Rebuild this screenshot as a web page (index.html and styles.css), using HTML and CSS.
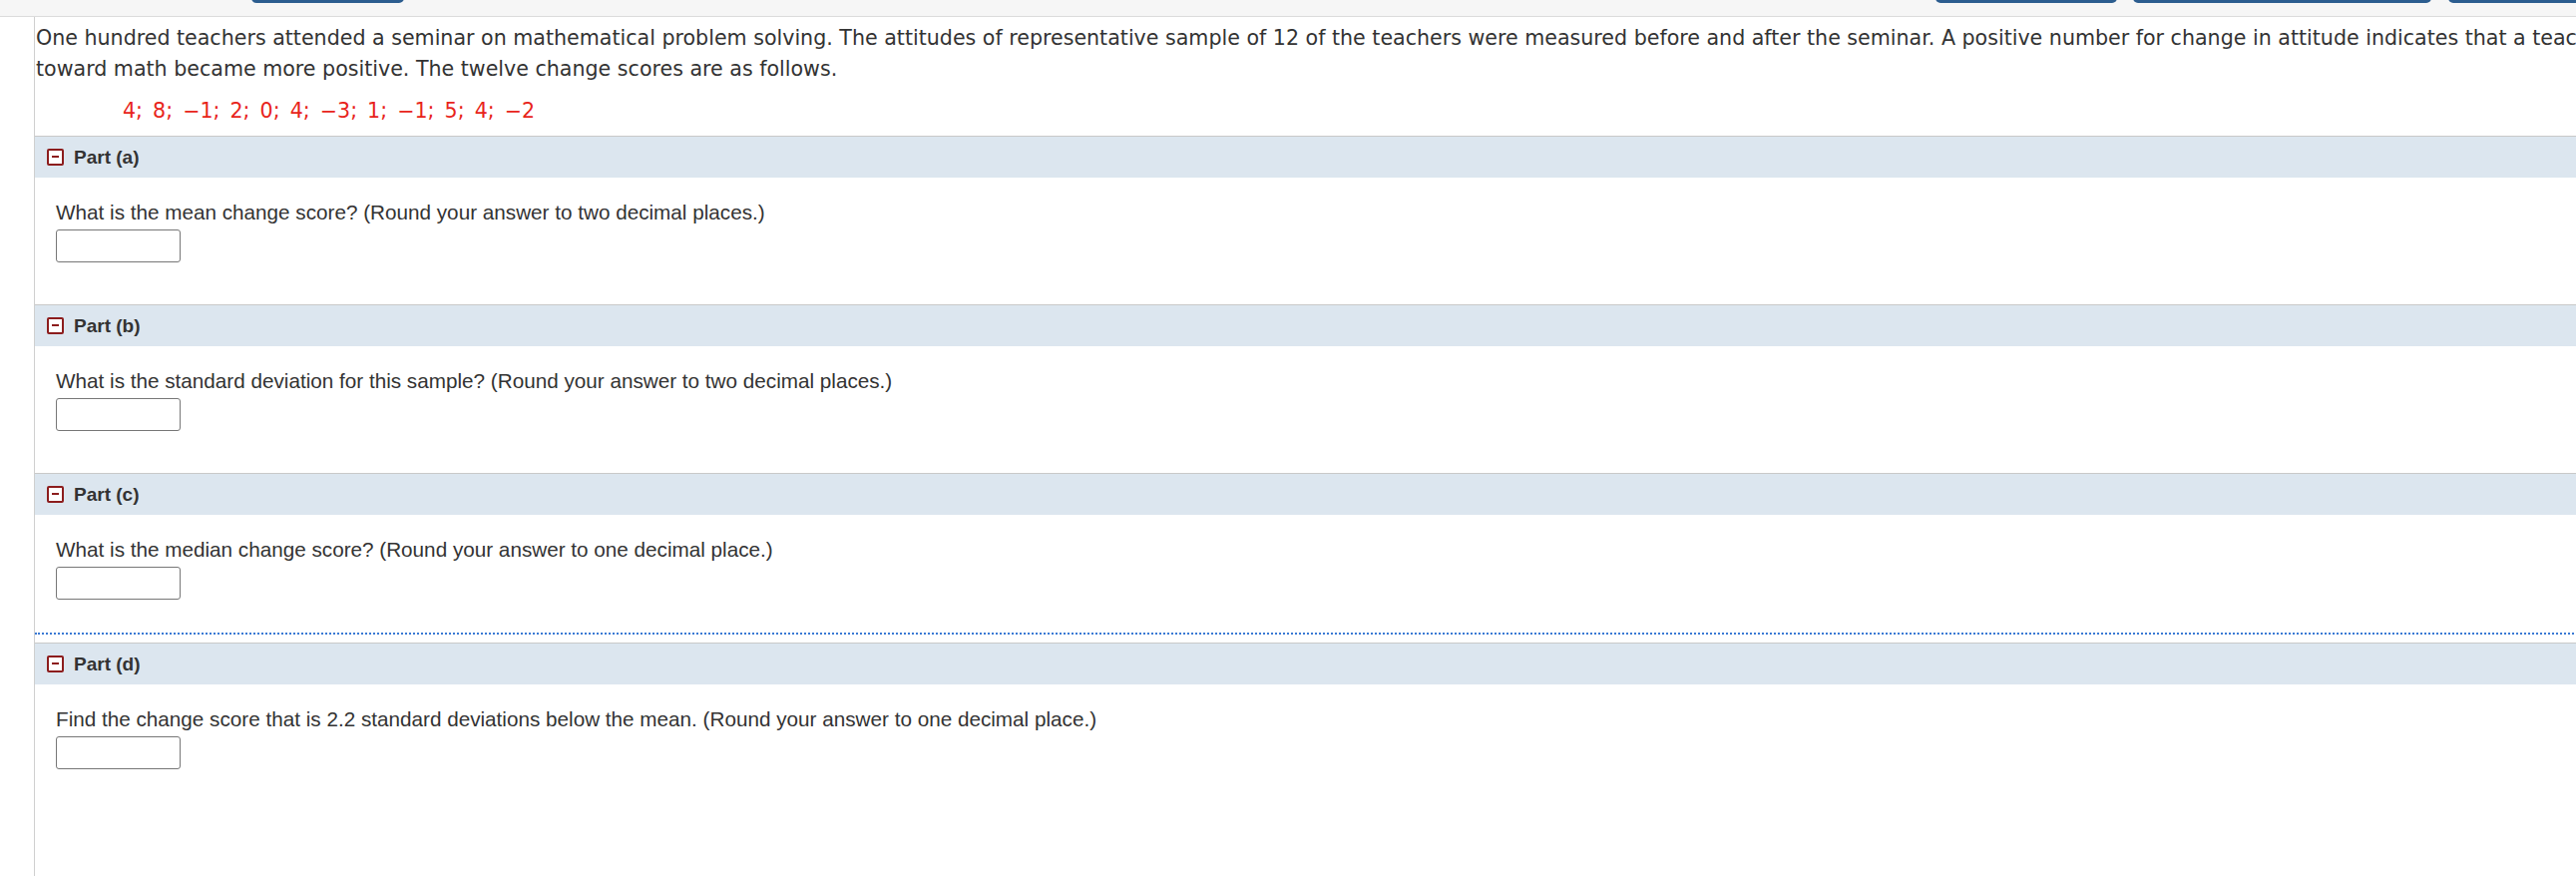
FILE: index.html
```
<!DOCTYPE html>
<html lang="en">
<head>
<meta charset="utf-8">
<title>Seminar problem</title>
<link rel="stylesheet" href="styles.css">
</head>
<body>
<div class="topbar">
  <span class="tab tab1"></span>
  <span class="tab tab2"></span>
  <span class="tab tab3"></span>
  <span class="tab tab4"></span>
</div>
<div class="main">
  <div class="intro">One hundred teachers attended a seminar on mathematical problem solving. The attitudes of representative sample of 12 of the teachers were measured before and after the seminar. A positive number for change in attitude indicates that a teacher's attitude toward math became more positive. The twelve change scores are as follows.</div>
  <div class="data">4; 8; −1; 2; 0; 4; −3; 1; −1; 5; 4; −2</div>

  <div class="part">
    <div class="part-head"><span class="toggle"></span><span class="part-title">Part (a)</span></div>
    <div class="part-body">
      <p class="q">What is the mean change score? (Round your answer to two decimal places.)</p>
      <input class="answer" type="text">
    </div>
  </div>

  <div class="part">
    <div class="part-head"><span class="toggle"></span><span class="part-title">Part (b)</span></div>
    <div class="part-body">
      <p class="q">What is the standard deviation for this sample? (Round your answer to two decimal places.)</p>
      <input class="answer" type="text">
    </div>
  </div>

  <div class="part">
    <div class="part-head"><span class="toggle"></span><span class="part-title">Part (c)</span></div>
    <div class="part-body part-body-c">
      <p class="q">What is the median change score? (Round your answer to one decimal place.)</p>
      <input class="answer" type="text">
    </div>
  </div>
  <div class="sep"></div>

  <div class="part">
    <div class="part-head"><span class="toggle"></span><span class="part-title">Part (d)</span></div>
    <div class="part-body">
      <p class="q">Find the change score that is 2.2 standard deviations below the mean. (Round your answer to one decimal place.)</p>
      <input class="answer" type="text">
    </div>
  </div>
</div>
</body>
</html>
```
FILE: styles.css
```
html, body {
  margin: 0;
  padding: 0;
  overflow: hidden;
  background: #fff;
}
body {
  width: 2582px;
  height: 878px;
}
.topbar {
  height: 16px;
  background: #f6f6f6;
  border-bottom: 1px solid #dcdcdc;
  display: flex;
  overflow: hidden;
}
.tab {
  display: block;
  height: 30px;
  margin-top: -27px;
  background: #2c5d8f;
  border-radius: 0 0 5px 5px;
  flex: none;
}
.tab1 { margin-left: 252px; width: 153px; }
.tab2 { margin-left: 1535px; width: 182px; }
.tab3 { margin-left: 16px; width: 299px; }
.tab4 { margin-left: 17px; width: 200px; }

.main {
  margin-left: 34px;
  width: 2780px;
  border-left: 1px solid #cfcfcf;
  min-height: 861px;
}
.intro {
  font-family: "DejaVu Sans", Verdana, sans-serif;
  font-size: 20.6px;
  line-height: 31px;
  color: #333;
  padding: 6px 0 0 1px;
  width: 2730px;
}
.data {
  font-family: "DejaVu Sans", Verdana, sans-serif;
  font-size: 20.6px;
  line-height: 31px;
  color: #e8241b;
  padding: 11px 0 0 88px;
  height: 40px;
  word-spacing: 3.5px;
}
.part {
  border-top: 1px solid #c9c9c9;
}
.part-head {
  height: 41px;
  background: #dce6ef;
  display: flex;
  align-items: center;
  padding-left: 12px;
  gap: 10px;
}
.toggle {
  width: 13px;
  height: 13px;
  border: 2px solid #8c1d1d;
  border-radius: 2px;
  background: #fff;
  position: relative;
  flex: none;
}
.toggle::after {
  content: "";
  position: absolute;
  left: 3px;
  top: 5px;
  width: 7px;
  height: 2px;
  background: #8c1d1d;
}
.part-title {
  font-family: "Liberation Sans", Arial, sans-serif;
  font-weight: bold;
  font-size: 19px;
  color: #333;
}
.part-body {
  padding: 23px 0 42px 21px;
}
.part-body-c {
  padding-bottom: 33px;
}
.q {
  margin: 0;
  font-family: "Liberation Sans", Arial, sans-serif;
  font-size: 20.7px;
  line-height: 24px;
  color: #333;
}
.answer {
  display: block;
  box-sizing: border-box;
  width: 125px;
  height: 33px;
  margin: 5px 0 0 0;
  border: 1px solid #777;
  border-radius: 3px;
  background: #fff;
  padding: 0;
}
.sep {
  border-top: 2px dotted #3a7ad4;
  margin-bottom: 8px;
}
```
